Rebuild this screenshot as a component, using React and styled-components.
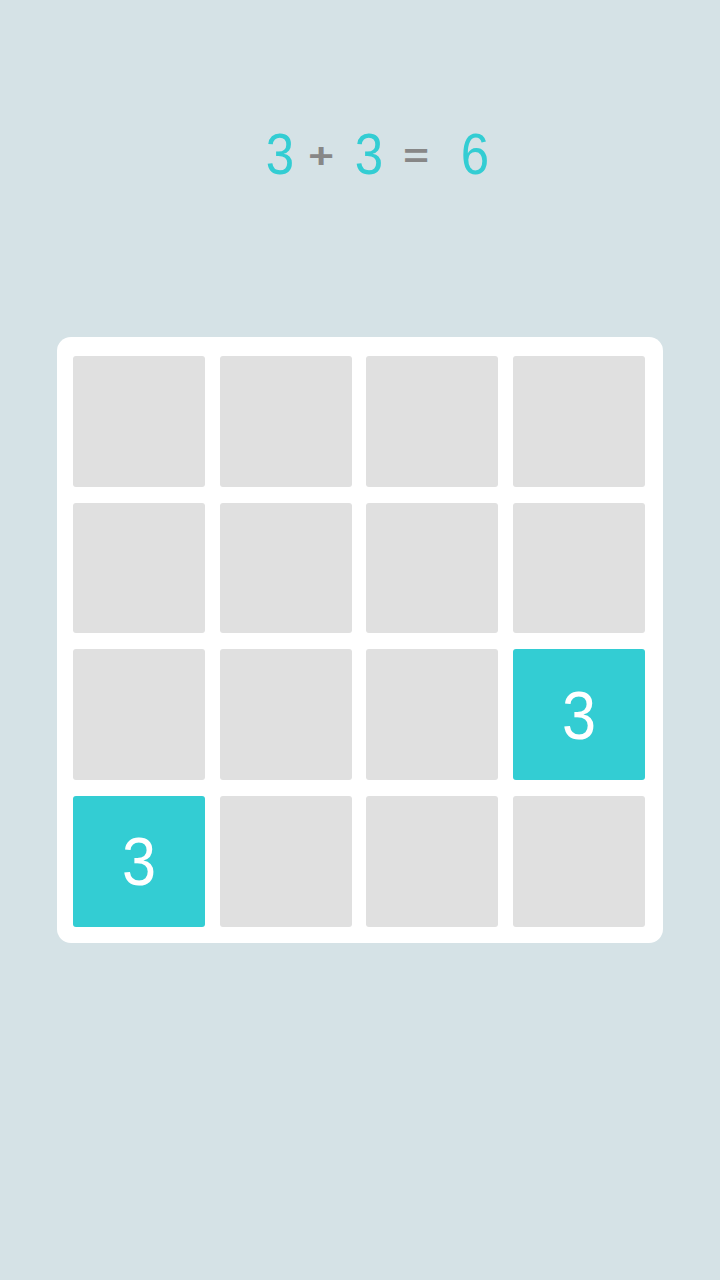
import React from "react";
import styled, { createGlobalStyle } from "styled-components";

const Global = createGlobalStyle`
  html, body { margin: 0; padding: 0; }
  body { background: #d5e2e6; font-family: "Liberation Sans", Arial, sans-serif; }
`;

const Page = styled.div`
  width: 720px;
  height: 1280px;
  background: #d5e2e6;
  display: flex;
  flex-direction: column;
  align-items: center;
`;

const Equation = styled.div`
  margin-top: 122px;
  padding-left: 34px;
  height: 64px;
  display: flex;
  align-items: center;
  font-family: "Liberation Sans", Arial, sans-serif;
`;

const Term = styled.span`
  display: inline-block;
  width: 40px;
  text-align: center;
  line-height: 64px;
  color: ${(p) => (p.$op ? "#878787" : "#33cdd3")};
  margin-left: ${(p) => p.$ml || 0}px;
  font-weight: ${(p) => (p.$op ? 700 : 400)};
  font-size: ${(p) => (p.$op ? 44 : 58)}px;
  transform: ${(p) => (p.$op ? "translateY(2px) scaleY(0.8)" : "scaleX(0.88)")};
`;

const Board = styled.div`
  margin-top: 151px;
  width: 606px;
  box-sizing: border-box;
  padding: 19px 18px 16px 16px;
  background: #ffffff;
  border-radius: 14px;
  display: grid;
  grid-template-columns: repeat(4, 132px);
  grid-template-rows: repeat(4, 130.5px);
  column-gap: 14.67px;
  row-gap: 16.2px;
`;

const Tile = styled.div`
  border-radius: 3px;
  background: ${(p) => (p.$value ? "#33cdd3" : "#e0e0e0")};
  color: #ffffff;
  display: flex;
  align-items: center;
  justify-content: center;
  font-size: 68px;
  font-family: "Liberation Sans", Arial, sans-serif;
`;

const TileNumber = styled.span`
  display: inline-block;
  transform: scaleX(0.9);
`;

const cells = [
  0, 0, 0, 0,
  0, 0, 0, 0,
  0, 0, 0, 3,
  3, 0, 0, 0,
];

export default function App() {
  return (
    <Page>
      <Global />
      <Equation>
        <Term>3</Term>
        <Term $op $ml={1.5}>+</Term>
        <Term $ml={8}>3</Term>
        <Term $op $ml={7}>=</Term>
        <Term $ml={18.5}>6</Term>
      </Equation>
      <Board>
        {cells.map((v, i) => (
          <Tile key={i} $value={v}>
            {v ? <TileNumber>{v}</TileNumber> : null}
          </Tile>
        ))}
      </Board>
    </Page>
  );
}
